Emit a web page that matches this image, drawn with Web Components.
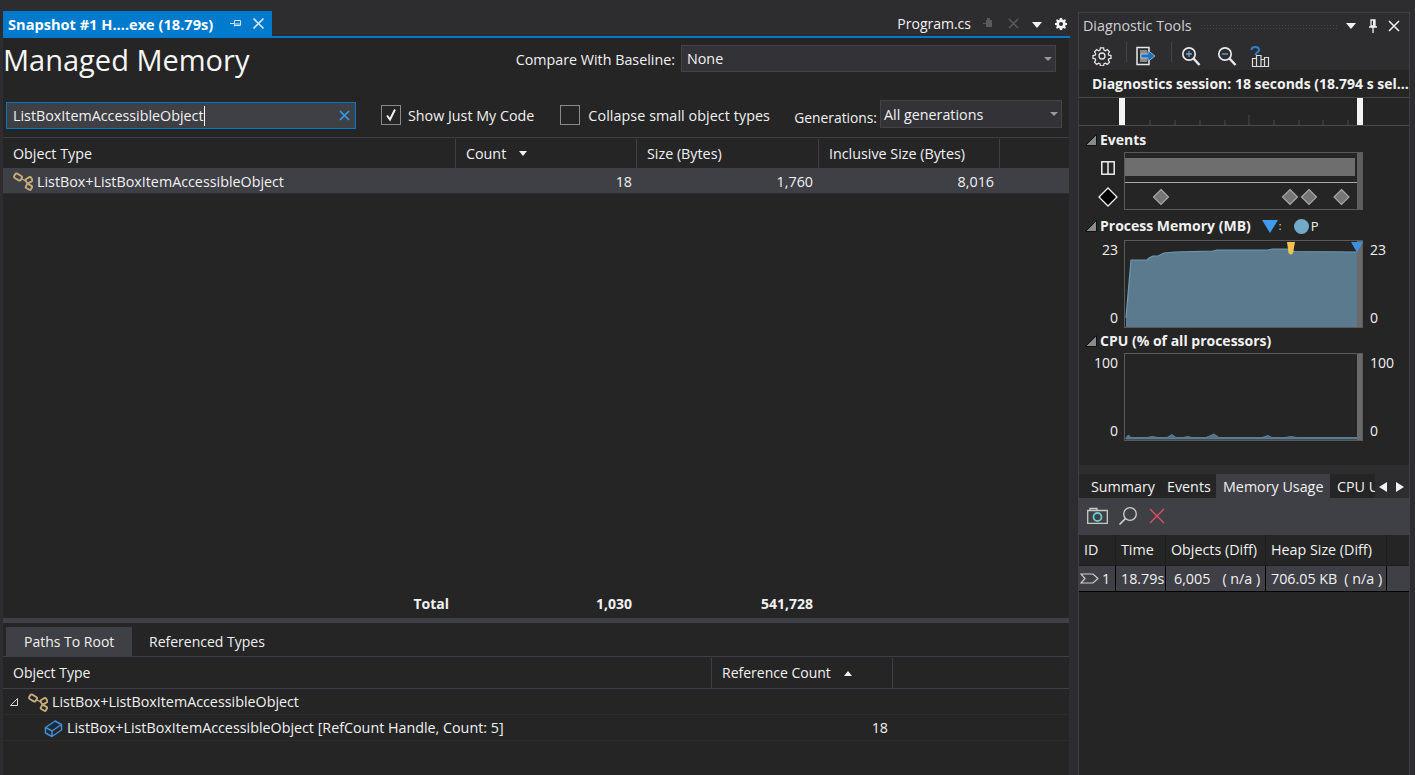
<!DOCTYPE html>
<html><head><meta charset="utf-8"><title>Managed Memory</title>
<style>
html,body{margin:0;height:100%;background:#2d2d30;overflow:hidden}
body{font:14.3px/18px "Open Sans","Noto Sans",sans-serif;color:#f1f1f1}
</style></head><body>
<vs-shell>
  <doc-well slot="doc"></doc-well>
  <diag-tools slot="diag"></diag-tools>
</vs-shell>
<script>
const BASE=`*{box-sizing:border-box}svg{display:block;flex:none}`;
function def(name,css,html){
  customElements.define(name,class extends HTMLElement{
    constructor(){super();const r=this.attachShadow({mode:'open'});
      const h=typeof html==='function'?html(this):html;
      r.innerHTML=`<style>${BASE}${css}</style>${h}`;}
  });
}
const ICON={
 cls:`<svg width="20" height="19" viewBox="0 0 20 19" fill="none" stroke="#c4ac76" stroke-width="1.900"><rect x="1.200" y="2.500" width="7.600" height="5" rx="1.500" transform="rotate(30 5 5)"/><rect x="12.800" y="5.700" width="6.200" height="4.800" rx="1.300" transform="rotate(-30 16 8)"/><rect x="13" y="12.800" width="5.800" height="4.400" rx="1.200" transform="rotate(30 16 15)"/><path d="M9 7l3.500 1.800M15.300 10.500l-.5 2.500" stroke-width="1.400"/></svg>`,
 box:`<svg width="19" height="19" viewBox="0 0 19 19" fill="none" stroke="#3f8fd8" stroke-width="1.500" stroke-linejoin="round"><path d="M8 12 17.500 5.500 11 2 1.500 8.500Z" fill="#1d2c3b"/><path d="M1.500 8.500V14L8 17.500 17.500 11V5.500M8 12V17.500"/></svg>`
};
def('vs-shell',`
 :host{display:grid;grid-template-columns:1066px 330px;column-gap:10px;padding:11px 0 0 3px;height:775px;overflow:hidden}
 ::slotted([slot=diag]){margin-top:1px}
`,`<slot name="doc"></slot><slot name="diag"></slot>`);

def('vs-select',`
 :host{display:flex;align-items:center;background:#333337;border:1px solid #434346;color:#f1f1f1;padding:0 3px 0 5px;height:100%}
 span{flex:1;white-space:nowrap;margin-top:1px}
 i{width:0;height:0;border:4px solid transparent;border-top:4px solid #999;border-bottom:0}
`,`<span><slot></slot></span><i></i>`);

def('vs-check',`
 :host{display:inline-flex;align-items:center;gap:7px;white-space:nowrap}
 b{width:20px;height:20px;border:1px solid #8a8a8e;background:#252526;display:block}
 span{margin-top:2px}
`,h=>`<b>${h.hasAttribute('checked')?`<svg width="18" height="18" viewBox="0 0 18 18" fill="none" stroke="#f1f1f1" stroke-width="2"><path d="M5 9.500 8 13.500 13 3.500"/></svg>`:''}</b><span><slot></slot></span>`);

def('grid-head',`
 :host{display:flex;height:31px;border-top:1px solid #3f3f46;flex:none;padding-top:1px}
`,`<slot></slot>`);
def('grid-col',`
 :host{display:flex;align-items:center;gap:13px;padding-left:10px;border-right:1px solid #3f3f46;white-space:nowrap}
 :host([last]){border-right:0}
 i{width:0;height:0;border:4.500px solid transparent}
 :host([sort=down]) i{border-top:5px solid #f1f1f1;border-bottom:0}
 :host([sort=up]) i{border-bottom:5px solid #f1f1f1;border-top:0}
`,h=>`<slot></slot>${h.hasAttribute('sort')?'<i></i>':''}`);

def('total-row',`
 :host{display:flex;height:26px;align-items:center;font-weight:700;flex:none;font-size:14px;margin-bottom:1px}
`,`<slot></slot>`);
def('num-cell',`
 :host{display:block;text-align:right;padding-right:5px;white-space:nowrap;flex:none}
`,`<slot></slot>`);

def('doc-tab',`
 :host{display:flex;height:25px;align-items:center;background:#007acc;color:#fff;font-weight:700;width:269px;padding-left:5px;white-space:nowrap;font-size:14.6px}
 span{flex:1}
`,`<span><slot></slot></span>
 <svg width="13" height="13" viewBox="0 0 13 13" fill="none" stroke="#cfe6f5" style="margin-right:10px"><path d="M1 6.500h4M5.500 3.500v6M5.500 3.500h6v5h-6M5.500 7h6"/></svg>
 <svg width="13" height="13" viewBox="0 0 13 13" fill="none" stroke="#d5eaf7" stroke-width="1.600" style="margin-right:7px"><path d="M1.500 1.500l10 10M11.500 1.500l-10 10"/></svg>`);

def('doc-well',`
 :host{display:flex;flex-direction:column;height:764px}
 .tabs{display:flex;align-items:center;height:25px;flex:none}
 .tabs .r{margin-left:auto;display:flex;align-items:center;height:25px;padding-right:2px}
 .rule{height:2px;background:#007acc;flex:none;margin-right:-1px}
 .body{flex:1;background:#252526;display:flex;flex-direction:column;min-height:0}
 .top{display:flex;height:62px;flex:none}
 h1{margin:0;font-weight:400;font-size:29px;line-height:44px;white-space:nowrap;color:#f6f6f6}
 .base{margin-left:auto;display:flex;padding-top:7px;height:34px;box-sizing:content-box}
 .base label{line-height:29px;margin-right:6px;white-space:nowrap}
 .base vs-select{width:375px;margin-right:13px;height:27px}
 .filter{display:flex;height:37px;flex:none;align-items:flex-start}
 .search{margin:2px 0 0 3px;width:350px;height:27px;background:#3f3f46;border:1px solid #007acc;display:flex;align-items:center;padding-left:6px;white-space:nowrap}
 .search span{border-right:1.500px solid #fff;line-height:20px;margin-right:auto}
 .search svg{margin-right:5px}
 vs-check{margin-top:5px}
 .gen{margin-left:auto;margin-right:7px;display:flex;margin-top:0}
 .gen label{margin-top:9px;margin-right:3px;white-space:nowrap;font-size:13.800px}
 .gen vs-select{width:182px;height:28px;padding-left:3px}
 .row{display:flex;height:26px;align-items:center;background:#3f3f46;flex:none;border-bottom:1px solid #2c2c2e;padding-top:2px}
 .row .nm{display:flex;align-items:center;width:453px;padding-left:10px;gap:4px;white-space:nowrap}
 .spacer{flex:1}
 .split{height:5px;background:#3f3f46;flex:none}
 .ptabs{display:flex;height:34px;flex:none;padding:4px 0 0 3px;border-bottom:1px solid #3f3f46;font-size:14px}
 .ptabs span{display:flex;align-items:center;white-space:nowrap;padding-top:1px}
 .ptabs .on{background:#3f3f46;padding:1px 18px 0;width:126px}
 .ptabs .off{padding-left:17px}
 .tr{display:flex;align-items:center;height:26px;flex:none;border-bottom:1px solid #2d2d30;white-space:nowrap;padding-top:1px}
 .tr svg{margin-right:4px}
 .tr .n{width:709px;display:flex;align-items:center}
`,`
 <div class="tabs"><doc-tab>Snapshot #1 H....exe (18.79s)</doc-tab>
  <div class="r"><span style="margin-right:11px;font-size:14px">Program.cs</span>
   <svg width="13" height="13" viewBox="0 0 13 13" fill="#5a5a5e" style="margin-right:12px"><path d="M1 6h3V3h6v7H4V7H1z"/><path d="M5 1h3v2H5z"/></svg>
   <svg width="13" height="13" viewBox="0 0 13 13" fill="none" stroke="#5a5a5e" stroke-width="1.500" style="margin-right:12px"><path d="M2 2l9 9M11 2l-9 9"/></svg>
   <svg width="10" height="6" viewBox="0 0 10 6" fill="#f1f1f1" style="margin-right:13px;margin-top:3px"><path d="M0 0h10L5 6z"/></svg>
   <svg width="12" height="12" viewBox="0 0 12 12" fill="#f1f1f1"><path fill-rule="evenodd" d="M4.800 0h2.400l.3 1.700 1 .4L10 1.200l1 1-.9 1.500.4 1 1.500.4v1.800l-1.500.4-.4 1 .9 1.500-1 1-1.500-.9-1 .4-.3 1.700H4.800l-.3-1.700-1-.4-1.500.9-1-1 .9-1.500-.4-1L0 6.900V5.100l1.500-.4.4-1L1 2.200l1-1 1.500.9 1-.4zM6 4a2 2 0 100 4 2 2 0 000-4z"/></svg>
  </div></div>
 <div class="rule"></div>
 <div class="body">
  <div class="top"><h1>Managed Memory</h1>
   <div class="base"><label>Compare With Baseline:</label><vs-select>None</vs-select></div></div>
  <div class="filter">
   <div class="search"><span>ListBoxItemAccessibleObject</span><svg width="11" height="11" viewBox="0 0 11 11" fill="none" stroke="#2b9fe8" stroke-width="1.700"><path d="M1 1l9 9M10 1l-9 9"/></svg></div>
   <vs-check checked style="margin-left:25px">Show Just My Code</vs-check>
   <vs-check style="margin-left:26px;gap:8px;letter-spacing:.08px">Collapse small object types</vs-check>
   <div class="gen"><label>Generations:</label><vs-select>All generations</vs-select></div>
  </div>
  <grid-head>
   <grid-col style="width:453px">Object Type</grid-col>
   <grid-col style="width:181px" sort="down">Count</grid-col>
   <grid-col style="width:182px">Size (Bytes)</grid-col>
   <grid-col style="width:181px">Inclusive Size (Bytes)</grid-col>
   <grid-col last style="width:69px"></grid-col>
  </grid-head>
  <div class="row"><span class="nm">${ICON.cls}ListBox+ListBoxItemAccessibleObject</span>
   <num-cell style="width:181px">18</num-cell><num-cell style="width:181px">1,760</num-cell><num-cell style="width:181px">8,016</num-cell></div>
  <div class="spacer"></div>
  <total-row><num-cell style="width:453px;padding-right:7px">Total</num-cell><num-cell style="width:181px">1,030</num-cell><num-cell style="width:181px">541,728</num-cell></total-row>
  <div class="split"></div>
  <div class="ptabs"><span class="on">Paths To Root</span><span class="off">Referenced Types</span></div>
  <grid-head style="border-top:0;border-bottom:1px solid #3f3f46;height:32px;font-size:14px">
   <grid-col style="width:709px">Object Type</grid-col>
   <grid-col style="width:181px" sort="up">Reference Count</grid-col>
   <grid-col last style="width:176px"></grid-col>
  </grid-head>
  <div class="tr"><span class="n"><svg width="12" height="12" viewBox="0 0 12 12" fill="none" stroke="#d8d8d8" style="margin:0 8.500px 0 4.500px"><path d="M9.500 2.500V9.500H2.500Z"/></svg>${ICON.cls}ListBox+ListBoxItemAccessibleObject</span></div>
  <div class="tr"><span class="n" style="padding-left:41px">${ICON.box}<span>ListBox+ListBoxItemAccessibleObject [RefCount Handle, Count: 5]</span></span><num-cell style="width:181px">18</num-cell></div>
  <div class="spacer" style="flex:none;height:34px"></div>
 </div>
`);

def('sec-head',`
 :host{display:flex;align-items:center;gap:3px;font-weight:700;white-space:nowrap;height:18px;font-size:14px}
 svg{margin-left:6px}
`,`<svg width="12" height="12" viewBox="0 0 12 12"><path d="M11.500 .5V11.500H.5Z" fill="#8a8a8a" stroke="#111"/></svg><slot></slot>`);
def('chart-row',`
 :host{display:flex;font-size:14px}
 .l,.r{display:flex;flex-direction:column;justify-content:space-between;padding:1px 0 0;height:var(--h);flex:none}
 .l{width:39px;text-align:right}
 .r{width:40px;padding-left:7px}
 .l span,.r span{line-height:18px}
 .c{padding:0;width:239px;margin-left:6px;flex:none}
`,h=>`<div class="l"><span>${h.getAttribute('max')}</span><span>0</span></div><div class="c"><slot></slot></div><div class="r"><span>${h.getAttribute('max')}</span><span>0</span></div>`);

def('diag-tools',`
 :host{display:flex;flex-direction:column;height:763px;border:1px solid #3f3f46;border-bottom:0;width:330px;margin-left:-1px;overflow:hidden}
 .title{display:flex;align-items:center;height:26px;flex:none;padding-left:4px;color:#d0d0d0;white-space:nowrap}
 .grip{flex:1;height:5px;margin:0 8px;background-image:radial-gradient(#46464a 40%,transparent 45%);background-size:3px 3px}
 .tb{display:flex;height:31px;flex:none;align-items:center;padding:3px 0 0 13px}
 .tb em{width:1px;height:20px;background:#46464a;margin:-8px 9px 0;flex:none}
 .sess{height:28px;background:#252526;flex:none;display:flex;align-items:center;padding-left:13px;font-weight:700;font-size:14px;white-space:nowrap;overflow:hidden;border-bottom:1px solid #4a4a4e}
 .upper{background:#252526;height:367px;flex:none;display:flex;flex-direction:column}
 .ruler{height:28px;flex:none;border-bottom:1px solid #4a4a4e}
 .ev{margin-top:5px}
 .evrow{display:flex;margin-top:3px;height:58px}
 .evl{width:45px;flex:none;display:flex;flex-direction:column;align-items:flex-end;padding:9px 9px 0 0;gap:12px}
 .mem{display:flex;align-items:center;gap:5px;margin-top:7px}
 .lg{display:flex;align-items:center;font-weight:400}
 .gap{height:9px;flex:none}
 .dtabs{display:flex;height:24px;flex:none;background:#252526;align-items:center;white-space:nowrap;overflow:hidden;position:relative}
 .dtabs span{height:24px;line-height:25px;flex:none}
 .dtabs .on{background:#3f3f46;padding:0 7px;width:114px}
 .dtabs .nav{position:absolute;right:0;top:0;width:34px;height:26px;background:#2d2d30;display:flex;align-items:center;gap:9px;padding:0 0 0 4px}
 .tool{height:37px;background:#3f3f46;flex:none;display:flex;align-items:center;padding:0 0 2px 8px;gap:10px}
 .gh{display:flex;height:30px;flex:none;background:#252526;white-space:nowrap}
 .gh span,.gr span{flex:none;display:flex;align-items:center;padding-left:5px;border-right:1px solid #1e1e1e;overflow:hidden}
 .gr{display:flex;height:27px;flex:none;background:#3f3f46;border-top:1px solid #1e1e1e;border-bottom:1px solid #000;white-space:nowrap}
 .gr span{border-right:1px solid #000}
 .gr i{font-style:normal}
 .rest{flex:1;background:#252526}
`,`
 <div class="title">Diagnostic Tools<div class="grip"></div>
  <svg width="10" height="6" viewBox="0 0 10 6" fill="#f1f1f1" style="margin-right:12px"><path d="M0 0h10L5 6z"/></svg>
  <svg width="10" height="14" viewBox="0 0 10 14" fill="none" stroke="#f1f1f1" stroke-width="1.300" style="margin-right:10px"><path d="M3 1h4v6H3zM1 8h8M5 8v6"/><path d="M6 1v6" stroke-width="2"/></svg>
  <svg width="12" height="12" viewBox="0 0 12 12" fill="none" stroke="#f1f1f1" stroke-width="1.500" style="margin-right:9px"><path d="M1 1l10 10M11 1L1 11"/></svg></div>
 <div class="tb">
  <svg width="20" height="20" viewBox="0 0 20 20" fill="none" stroke="#e8e8e8" stroke-width="1.300"><path d="M8.300 1.500h3.400l.4 2.300 1.500.7 2-1.300 2.300 2.400-1.300 2 .6 1.500 2.300.4v3l-2.300.4-.6 1.500 1.300 2-2.300 2.400-2-1.300-1.500.6-.4 2.300H8.300l-.4-2.300-1.500-.6-2 1.300-2.300-2.400 1.300-2-.6-1.500-2.300-.4v-3l2.300-.4.6-1.500-1.300-2 2.300-2.400 2 1.300 1.500-.7z" transform="translate(.5 .5) scale(.95)"/><circle cx="10" cy="10" r="3"/></svg>
  <em style="margin-left:14px;margin-right:9px"></em>
  <svg width="20" height="20" viewBox="0 0 20 20" style="margin-right:15px"><path d="M1 1.500h12v17H1z" fill="#2a2a2c" stroke="#e8e8e8" stroke-width="1.500"/><path d="M4 4h7v12H4z" fill="#8a8a8a"/><path d="M5 8h7V4.500l7 5.500-7 5.500V12H5z" fill="#1e73c0" stroke="#e8e8e8" stroke-width=".6"/></svg>
  <em style="margin:-8px 9px 0 0"></em>
  <svg width="20" height="21" viewBox="0 0 20 21" fill="none" stroke="#e8e8e8" stroke-width="1.700" style="margin-right:16px"><circle cx="8" cy="8" r="6.200"/><path d="M12.500 12.500l6 6.500" stroke-width="2.500"/><path d="M5 8h6M8 5v6" stroke="#6aa7dd" stroke-width="1.300"/></svg>
  <svg width="20" height="21" viewBox="0 0 20 21" fill="none" stroke="#e8e8e8" stroke-width="1.700" style="margin-right:13px"><circle cx="8" cy="8" r="6.200"/><path d="M12.500 12.500l6 6.500" stroke-width="2.500"/><path d="M5 8h6" stroke="#6aa7dd" stroke-width="1.300"/></svg>
  <svg width="20" height="21" viewBox="0 0 20 21" fill="none" stroke="#dcdcdc" stroke-width="1.200"><path d="M2.500 20.500v-8h4v8zM6.500 20.500v-11h4.500v11zM11 20.500v-7h3.500v7zM14.500 20.500v-9h4v9z"/><path d="M1.500 4c0-4 7.500-4 7.500 0 0 2.500-3.500 2-3.500 5" stroke="#2f7fcf" stroke-width="2"/></svg>
 </div>
 <div class="sess">Diagnostics session: 18 seconds (18.794 s sel...</div>
 <div class="upper">
  <div class="ruler"><svg width="329" height="27" viewBox="1079 98 329 27"><path d="M1150 125v-5M1175 125v-5M1200 125v-5M1225 125v-5M1249 125v-10M1274 125v-5M1299 125v-5M1323 125v-5M1348 125v-5" stroke="#4a4a4e"/><rect x="1119" y="98" width="6" height="27" fill="#f4f4f4"/><rect x="1357" y="98" width="6" height="27" fill="#f4f4f4"/></svg></div>
  <sec-head class="ev">Events</sec-head>
  <div class="evrow">
   <div class="evl">
    <svg width="14" height="14" viewBox="0 0 14 14" fill="none" stroke="#efefef" stroke-width="1.500"><rect x=".8" y=".8" width="12.400" height="12.400"/><path d="M7 1v12"/></svg>
    <svg width="20" height="20" viewBox="0 0 20 20" style="margin-right:-3px"><path d="M10 1 19 10 10 19 1 10Z" fill="#000" stroke="#efefef" stroke-width="1.300"/></svg>
   </div>
   <svg width="239" height="58" viewBox="1124 152 239 58"><rect x="1124.500" y="152.500" width="238" height="57" fill="none" stroke="#5a5a5c"/><rect x="1125" y="158" width="230" height="18" fill="#6e6e6e"/><path d="M1125 182.500h237" stroke="#a8a8a8"/><rect x="1357" y="153" width="5" height="56" fill="#5f5f5f"/><g fill="#757575" stroke="#a8a8a8" stroke-width="1.200"><path d="M1161 189.500l7.500 7.500-7.500 7.500-7.500-7.500z"/><path d="M1290 189.500l7.500 7.500-7.500 7.500-7.500-7.500z"/><path d="M1309 189.500l7.500 7.500-7.500 7.500-7.500-7.500z"/><path d="M1341.500 189.500l7.500 7.500-7.500 7.500-7.500-7.500z"/></g></svg>
  </div>
  <div class="mem"><sec-head>Process Memory (MB)</sec-head>
   <span class="lg"><svg width="16" height="13" viewBox="0 0 16 13" fill="#3f9bee" style="margin-left:6px"><path d="M0 0h16L8 13z"/></svg><span style="width:10px;font-size:10px;margin-left:1px">:</span><svg width="15" height="15" viewBox="0 0 15 15" fill="#73aac6" style="margin-left:5px"><circle cx="7.500" cy="7.500" r="7.500"/></svg><span style="margin-left:2px;font-size:13px">P</span></span></div>
  <chart-row max="23" style="--h:87px;margin-top:5px">
   <svg width="239" height="88" viewBox="1124 240 239 88"><rect x="1124.500" y="240.500" width="238" height="87" fill="#252526" stroke="#5a5a5c"/><path d="M1126 327V318L1131 260H1147L1149 258L1153 256H1158L1164 253L1175 252L1213 251L1217 250L1268 250L1272 249L1287 249L1295 251.500L1357 252V327Z" fill="#5b7a8e"/><path d="M1126 318L1131 260H1147L1149 258L1153 256H1158L1164 253L1175 252L1213 251L1217 250L1268 250L1272 249L1287 249L1295 251.500L1357 252" fill="none" stroke="#6b9bb5" stroke-width="1.200"/><rect x="1357" y="241" width="5" height="86" fill="#6a6a6a"/><path d="M1287 242h8l-2 11-1.500 1.500h-1.500l-1.500-1.500z" fill="#f5c24f"/><path d="M1351 242h12l-6 10.500z" fill="#3f8fe0"/></svg>
  </chart-row>
  <sec-head style="margin-top:4px">CPU (% of all processors)</sec-head>
  <chart-row max="100" style="--h:87px;margin-top:3px">
   <svg width="239" height="88" viewBox="1124 353 239 88"><rect x="1124.500" y="353.500" width="238" height="87" fill="#252526" stroke="#5a5a5c"/><path d="M1126 439V437.500L1128.500 435L1131 437.500H1147L1152 436.500L1158 437.500H1167L1172 434.500L1176 437.500H1183L1188 436.500L1192 437.500H1206L1214 434L1219 437.500H1262L1268 435.500L1272 437.500H1285L1291 436.500L1297 437.500H1357V439Z" fill="#557286" stroke="#5f8ca5" stroke-width=".8"/><rect x="1357" y="354" width="5" height="86" fill="#6a6a6a"/></svg>
  </chart-row>
 </div>
 <div class="gap"></div>
 <div class="dtabs"><span style="width:82px;padding-left:12px">Summary</span><span style="width:55px;padding-left:6px">Events</span><span class="on">Memory Usage</span><span style="padding-left:7px">CPU Usage</span>
  <div class="nav"><svg width="8" height="10" viewBox="0 0 8 10" fill="#f1f1f1"><path d="M8 0v10L0 5z"/></svg><svg width="8" height="10" viewBox="0 0 8 10" fill="#f1f1f1"><path d="M0 0v10l8-5z"/></svg></div></div>
 <div class="tool">
  <svg width="21" height="17" viewBox="0 0 21 17" fill="none" stroke="#c8c8c8" stroke-width="1.300"><path d="M.7 3.500h19.600v13H.7zM3 3.500V1.500h7v2"/><circle cx="10.500" cy="10" r="4" stroke="#6fc7c7" stroke-width="1.800"/></svg>
  <svg width="20" height="20" viewBox="0 0 20 20" fill="none" stroke="#d0d0d0" stroke-width="1.300"><circle cx="12" cy="8" r="6.300"/><path d="M7.500 12.500 1.500 18.500" stroke-width="1.700"/></svg>
  <svg width="16" height="16" viewBox="0 0 16 16" fill="none" stroke="#d9535f" stroke-width="1.400" style="margin-left:1px"><path d="M1 1l14 14M15 1 1 15"/></svg>
 </div>
 <div class="gh"><span style="width:37px">ID</span><span style="width:50px">Time</span><span style="width:100px">Objects (Diff)</span><span style="width:121px">Heap Size (Diff)</span><span style="flex:1;border:0"></span></div>
 <div class="gr"><span style="width:37px;padding-left:1px;gap:3px"><svg width="19" height="11" viewBox="0 0 19 11" fill="none" stroke="#cfcfcf" stroke-width="1.200"><path d="M1 1h12l5 4.500L13 10H1l4-4.500z"/></svg>1</span><span style="width:50px">18.79s</span><span style="width:100px;padding-left:8px;gap:12px"><i>6,005</i><i>( n/a )</i></span><span style="width:121px;gap:7px"><i>706.05 KB</i><i>( n/a )</i></span><span style="flex:1;border:0"></span></div>
 <div class="rest"></div>
`);
</script>
</body></html>
